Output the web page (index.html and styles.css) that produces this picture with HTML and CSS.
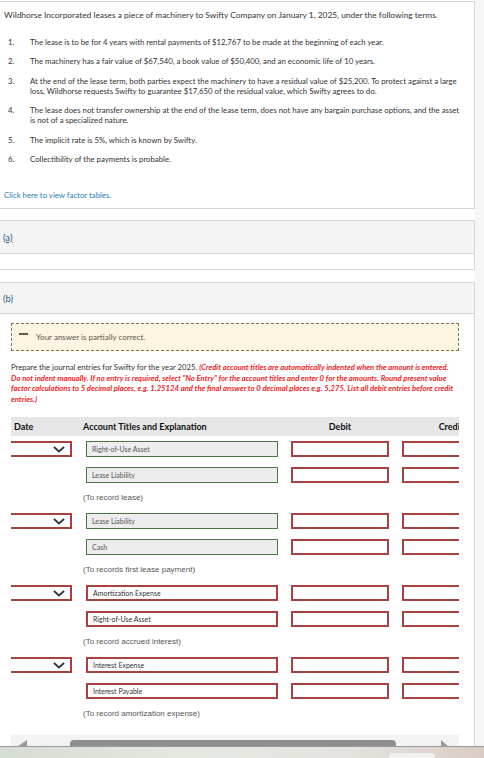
FILE: index.html
```html
<!DOCTYPE html>
<html lang="en">
<head>
<meta charset="utf-8">
<title>Lease problem</title>
<link rel="stylesheet" href="styles.css">
</head>
<body>
<div class="page">
  <section class="card intro">
    <p class="lead">Wildhorse Incorporated leases a piece of machinery to Swifty Company on January 1, 2025, under the following terms.</p>
    <ol class="terms">
      <li><span class="num">1.</span><span class="txt">The lease is to be for 4 years with rental payments of $12,767 to be made at the beginning of each year.</span></li>
      <li><span class="num">2.</span><span class="txt">The machinery has a fair value of $67,540, a book value of $50,400, and an economic life of 10 years.</span></li>
      <li><span class="num">3.</span><span class="txt">At the end of the lease term, both parties expect the machinery to have a residual value of $25,200. To protect against a large loss, Wildhorse requests Swifty to guarantee $17,650 of the residual value, which Swifty agrees to do.</span></li>
      <li><span class="num">4.</span><span class="txt">The lease does not transfer ownership at the end of the lease term, does not have any bargain purchase options, and the asset is not of a specialized nature.</span></li>
      <li><span class="num">5.</span><span class="txt">The implicit rate is 5%, which is known by Swifty.</span></li>
      <li><span class="num">6.</span><span class="txt">Collectibility of the payments is probable.</span></li>
    </ol>
    <a class="factor" href="#">Click here to view factor tables.</a>
  </section>

  <section class="card part part-a">
    <div class="part-head head-a"><a class="part-link" href="#">(a)</a></div>
    <div class="part-empty"></div>
  </section>

  <section class="card part part-b">
    <div class="part-head head-b"><span class="part-label">(b)</span></div>
    <div class="part-body">
      <div class="notice"><span class="dash"></span><span class="notice-text">Your answer is partially correct.</span></div>
      <p class="instr">Prepare the journal entries for Swifty for the year 2025. <em>(Credit account titles are automatically indented when the amount is entered. Do not indent manually. If no entry is required, select "No Entry" for the account titles and enter 0 for the amounts. Round present value factor calculations to 5 decimal places, e.g. 1.25124 and the final answer to 0 decimal places e.g. 5,275. List all debit entries before credit entries.)</em></p>

      <div class="table-wrap">
        <div class="thead">
          <span class="h-date">Date</span>
          <span class="h-acct">Account Titles and Explanation</span>
          <span class="h-num">Debit</span>
          <span class="h-num">Credit</span>
        </div>
        <div class="tbody">
          <div class="entry">
            <div class="row">
              <div class="sel"><svg class="chev" width="12" height="7" viewBox="0 0 12 7"><polyline points="1,1 6,5.5 11,1" fill="none" stroke="#333" stroke-width="1.8"/></svg></div>
              <div class="acct">Right-of-Use Asset</div>
              <div class="amt"></div>
              <div class="amt"></div>
            </div>
            <div class="row">
              <div class="blank"></div>
              <div class="acct">Lease Liability</div>
              <div class="amt"></div>
              <div class="amt"></div>
            </div>
            <div class="expl">(To record lease)</div>
          </div>

          <div class="entry">
            <div class="row">
              <div class="sel"><svg class="chev" width="12" height="7" viewBox="0 0 12 7"><polyline points="1,1 6,5.5 11,1" fill="none" stroke="#333" stroke-width="1.8"/></svg></div>
              <div class="acct">Lease Liability</div>
              <div class="amt"></div>
              <div class="amt"></div>
            </div>
            <div class="row">
              <div class="blank"></div>
              <div class="acct">Cash</div>
              <div class="amt"></div>
              <div class="amt"></div>
            </div>
            <div class="expl">(To records first lease payment)</div>
          </div>

          <div class="entry">
            <div class="row">
              <div class="sel"><svg class="chev" width="12" height="7" viewBox="0 0 12 7"><polyline points="1,1 6,5.5 11,1" fill="none" stroke="#333" stroke-width="1.8"/></svg></div>
              <div class="acct bad">Amortization Expense</div>
              <div class="amt"></div>
              <div class="amt"></div>
            </div>
            <div class="row">
              <div class="blank"></div>
              <div class="acct bad">Right-of-Use Asset</div>
              <div class="amt"></div>
              <div class="amt"></div>
            </div>
            <div class="expl">(To record accrued interest)</div>
          </div>

          <div class="entry">
            <div class="row">
              <div class="sel"><svg class="chev" width="12" height="7" viewBox="0 0 12 7"><polyline points="1,1 6,5.5 11,1" fill="none" stroke="#333" stroke-width="1.8"/></svg></div>
              <div class="acct bad">Interest Expense</div>
              <div class="amt"></div>
              <div class="amt"></div>
            </div>
            <div class="row">
              <div class="blank"></div>
              <div class="acct bad">Interest Payable</div>
              <div class="amt"></div>
              <div class="amt"></div>
            </div>
            <div class="expl">(To record amortization expense)</div>
          </div>
        </div>
      </div>

      <div class="hscroll">
        <span class="arrow-left"></span>
        <span class="thumb"></span>
        <span class="arrow-right"></span>
      </div>
    </div>
  </section>
</div>
<div class="bottom-strip"><span class="pill"></span></div>
</body>
</html>
```

FILE: styles.css
```css
* { box-sizing: border-box; }

html, body {
  margin: 0;
  padding: 0;
}

body {
  width: 484px;
  height: 758px;
  overflow: hidden;
  background: #f6f6f6;
  font-family: Lato, "Noto Sans", sans-serif;
  color: #333;
  position: relative;
}

.page {
  width: 475px;
  min-height: 758px;
  background: #fff;
  padding-top: 1px;
}

.card {
  border: 1px solid #d6d6d6;
  border-left: none;
}

/* intro card */
.intro {
  padding: 8px 10px 8px 4px;
}

.lead {
  margin: 0;
  font-size: 8.4px;
  line-height: 10px;
  white-space: nowrap;
}

.terms {
  list-style: none;
  margin: 16.5px 0 0;
  padding: 0;
}

.terms li {
  display: flex;
  font-size: 7.8px;
  line-height: 10px;
  margin-bottom: 9.5px;
}

.terms li:last-child { margin-bottom: 0; }

.num {
  flex: none;
  width: 26px;
  padding-left: 4px;
}

.txt { flex: 1; }

.factor {
  display: block;
  margin-top: 26px;
  font-size: 7.8px;
  line-height: 10px;
  color: #1f7fb8;
  text-decoration: none;
}

/* parts */
.part-a { margin-top: 11px; }
.part-b { margin-top: 12px; border-bottom: none; }

.part-head {
  display: flex;
  align-items: center;
  background: #f4f4f4;
  border-bottom: 1px solid #d6d6d6;
  padding-left: 3px;
  font-size: 9.5px;
}

.head-a { height: 33px; }
.head-b { height: 31px; }

.part-link {
  color: #2d5b85;
  text-decoration: underline;
}

.part-label { color: #2d5b85; }

.part-empty { height: 15px; }

.part-body {
  padding: 9px 15px 0 11px;
}

.notice {
  display: flex;
  align-items: center;
  height: 28px;
  border: 1px dashed #8a7248;
  background: #fcf5e2;
  padding-left: 7px;
}

.dash {
  flex: none;
  width: 9px;
  height: 2.5px;
  background: #6b5b3e;
  margin-right: 8px;
  align-self: flex-start;
  margin-top: 8.5px;
}

.notice-text {
  font-size: 8px;
  color: #5c5548;
}

.instr {
  margin: 11px 0 0;
  font-size: 7.7px;
  line-height: 10.5px;
  color: #333;
}

.instr em {
  font-style: italic;
  font-weight: bold;
  color: #ee1c25;
}

/* journal table */
.table-wrap {
  width: 448px;
  overflow: hidden;
  margin-top: 13px;
}

.thead,
.row {
  display: grid;
  grid-template-columns: 62px 192px 98px 98px;
  column-gap: 13px;
  width: 489px;
}

.thead {
  height: 19px;
  align-items: center;
  background: #e6e6e6;
  font-weight: bold;
  font-size: 9px;
  color: #111;
}

.h-date { padding-left: 3px; }
.h-acct { margin-left: -3px; white-space: nowrap; }
.h-num { text-align: center; }

.tbody { padding-top: 5px; }

.row { height: 16px; }
.row + .row { margin-top: 10px; }

.sel {
  width: 63px;
  height: 16px;
  margin-left: -2px;
  border: 2px solid #a8423f;
  background: #fff;
  display: flex;
  align-items: center;
  justify-content: flex-end;
  padding-right: 5px;
}

.chev { display: block; }

.acct {
  height: 16px;
  border: 1px solid #47783f;
  background: #ededed;
  display: flex;
  align-items: center;
  padding-left: 5px;
  font-size: 7px;
  color: #555;
  white-space: nowrap;
}

.acct.bad {
  border: 2px solid #a8423f;
  background: #fff;
  color: #333;
  padding-left: 5px;
}

.amt {
  height: 16px;
  border: 2px solid #a8423f;
  background: #fff;
}

.expl {
  height: 30px;
  line-height: 30px;
  padding-left: 72px;
  font-family: "Liberation Sans", Arial, sans-serif;
  font-size: 8px;
  color: #555;
}

/* horizontal scrollbar */
.hscroll {
  display: flex;
  align-items: flex-start;
  width: 448px;
  height: 12px;
  margin-top: 6px;
  background: #f3f3f3;
  padding-top: 5px;
}

.arrow-left {
  flex: none;
  width: 0;
  height: 0;
  margin-left: 7px;
  border-top: 6px solid transparent;
  border-bottom: 6px solid transparent;
  border-right: 9px solid #9a9a9a;
}

.thumb {
  flex: none;
  width: 326px;
  height: 10px;
  margin-left: 43px;
  background: #8e8e8e;
  border-radius: 4px;
}

.arrow-right {
  flex: none;
  width: 0;
  height: 0;
  margin-left: 45px;
  border-top: 6px solid transparent;
  border-bottom: 6px solid transparent;
  border-left: 7px solid #9a9a9a;
}

/* OS strip overlapping the bottom */
.bottom-strip {
  position: absolute;
  left: 0;
  bottom: 0;
  width: 484px;
  height: 12px;
  border-top: 1px solid #9a9a9a;
  background: linear-gradient(90deg, #d6ddd4 0%, #e4e8e1 40%, #e5e3df 72%, #d9ccc4 100%);
  display: flex;
  padding-top: 6px;
}

.pill {
  margin-left: 389px;
  width: 46px;
  height: 10px;
  border-radius: 4px;
  background: #f3f1ee;
}
```
